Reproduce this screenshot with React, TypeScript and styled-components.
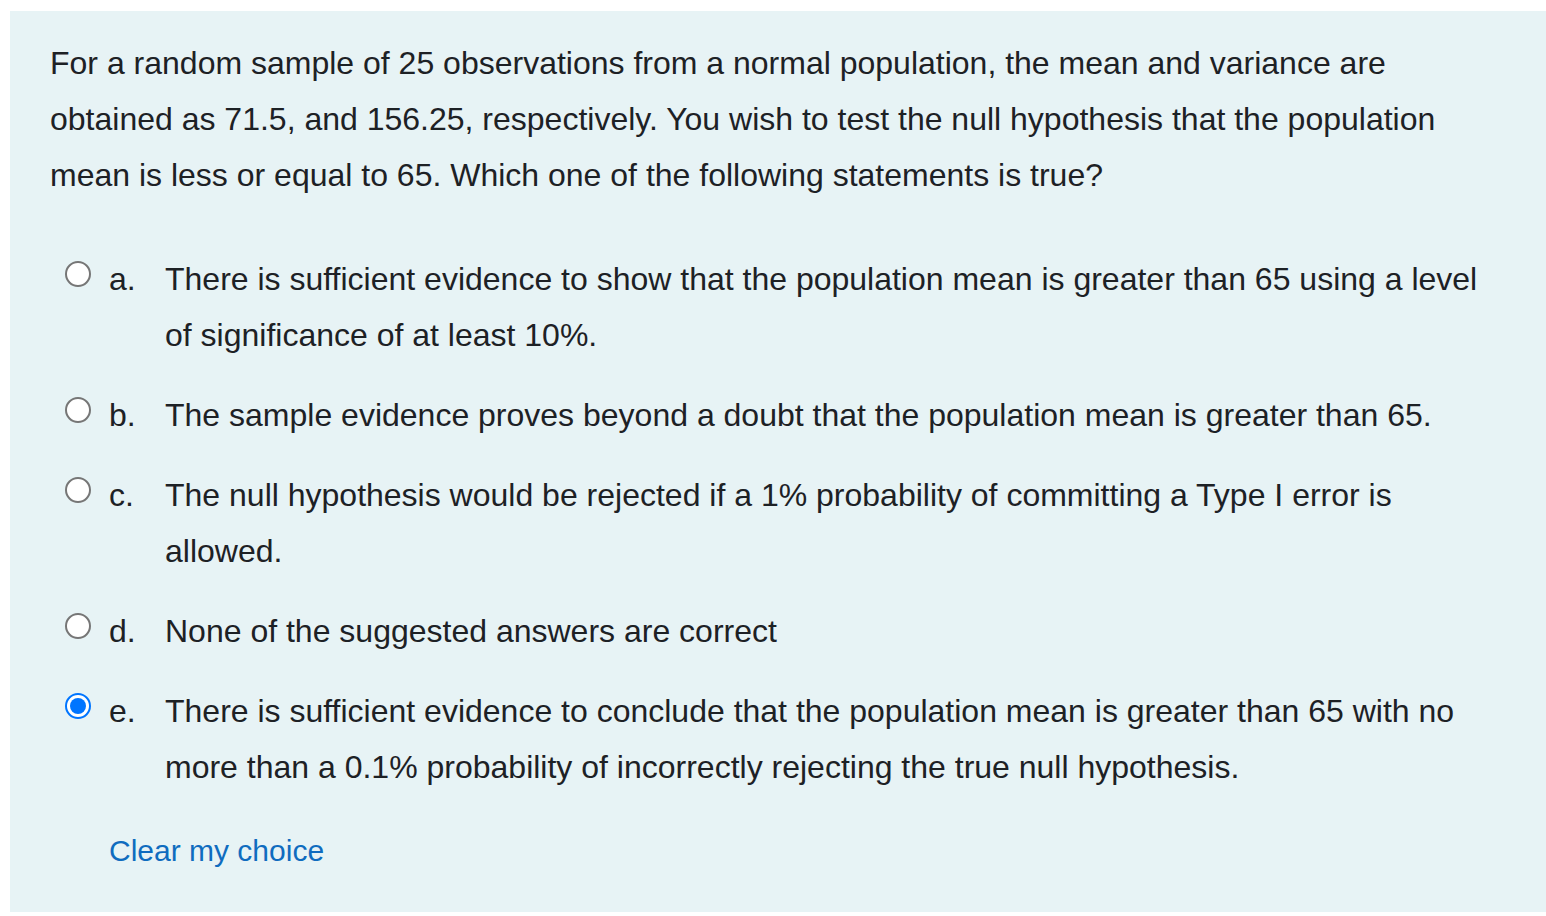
import React, { useState } from "react";
import styled, { createGlobalStyle } from "styled-components";

const Global = createGlobalStyle`
  html, body { margin: 0; padding: 0; background: #ffffff; }
  body { font-family: "Liberation Sans", Arial, sans-serif; color: #1d2125; }
`;

const Page = styled.div`
  padding: 11px 0 4px 10px;
`;

const Panel = styled.div`
  background: #e7f3f5;
  padding: 24px 56px 30px 40px;
  font-size: 32px;
  line-height: 56px;
  min-height: 901px;
  box-sizing: border-box;
`;

const QText = styled.p`
  margin: 0 0 48px 0;
`;

const Options = styled.div`
  display: flex;
  flex-direction: column;
  gap: 24px;
  padding-left: 15px;
`;

const Option = styled.label`
  display: flex;
  align-items: flex-start;
  cursor: pointer;
`;

const RadioBox = styled.span`
  flex: 0 0 26px;
  height: 56px;
  display: flex;
  align-items: center;
  margin-top: -5px;
  margin-right: 18px;
`;

const Radio = styled.span<{ $checked: boolean }>`
  width: 26px;
  height: 26px;
  border-radius: 50%;
  box-sizing: border-box;
  background: #ffffff;
  border: ${(p) => (p.$checked ? "2px solid #0075ff" : "2px solid #767676")};
  display: flex;
  align-items: center;
  justify-content: center;
  &::after {
    content: "";
    display: ${(p) => (p.$checked ? "block" : "none")};
    width: 16px;
    height: 16px;
    border-radius: 50%;
    background: #0075ff;
  }
`;

const Letter = styled.span`
  flex: 0 0 56px;
`;

const Answer = styled.span`
  flex: 1;
`;

const ClearLink = styled.a`
  display: block;
  margin: 4px 0 0 44px;
  font-size: 30px;
  color: #0f6cbf;
  text-decoration: none;
  cursor: pointer;
`;

const options = [
  {
    l: "a.",
    t: "There is sufficient evidence to show that the population mean is greater than 65 using a level of significance of at least 10%.",
  },
  {
    l: "b.",
    t: "The sample evidence proves beyond a doubt that the population mean is greater than 65.",
  },
  {
    l: "c.",
    t: "The null hypothesis would be rejected if a 1% probability of committing a Type I error is allowed.",
  },
  { l: "d.", t: "None of the suggested answers are correct" },
  {
    l: "e.",
    t: "There is sufficient evidence to conclude that the population mean is greater than 65 with no more than a 0.1% probability of incorrectly rejecting the true null hypothesis.",
  },
];

export default function App() {
  const [sel, setSel] = useState<number | null>(4);
  return (
    <Page>
      <Global />
      <Panel>
        <QText>
          For a random sample of 25 observations from a normal population, the mean and variance are
          obtained as 71.5, and 156.25, respectively. You wish to test the null hypothesis that the
          population mean is less or equal to 65. Which one of the following statements is true?
        </QText>
        <Options>
          {options.map((o, i) => (
            <Option key={o.l} onClick={() => setSel(i)}>
              <RadioBox>
                <Radio $checked={sel === i} />
              </RadioBox>
              <Letter>{o.l}</Letter>
              <Answer>{o.t}</Answer>
            </Option>
          ))}
          <ClearLink onClick={() => setSel(null)}>Clear my choice</ClearLink>
        </Options>
      </Panel>
    </Page>
  );
}
